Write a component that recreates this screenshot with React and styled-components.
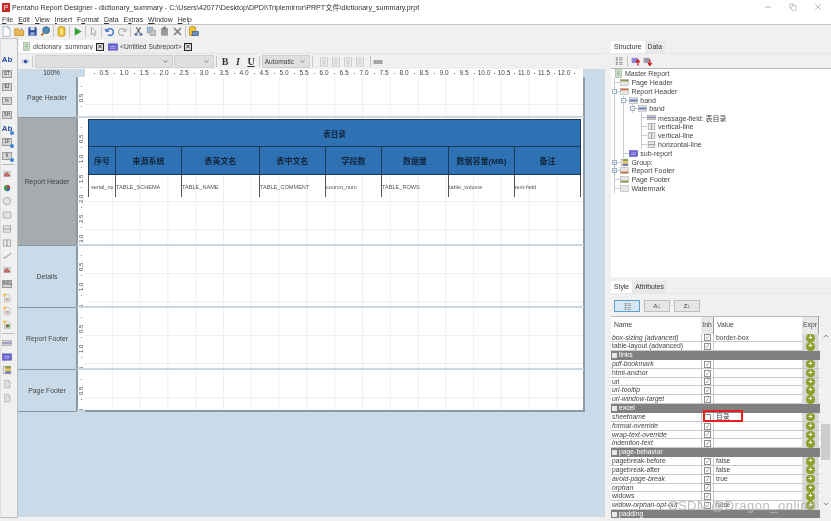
import React from "react";
import styled, { createGlobalStyle } from "styled-components";
import { Minus, Copy, X, ChevronDown, ChevronUp } from "lucide-react";

const GlobalStyle = createGlobalStyle`
  html, body {
    margin: 0;
    padding: 0;
    background: #f0f0f0;
  }
  * {
    box-sizing: border-box;
  }
`;

const SANS = `"Liberation Sans", "Noto Sans CJK SC", sans-serif`;

// small toolbar drawings, keyed by name
const glyphs = {
  doc: <><path d="M3 1h7l3 3v11H3z" fill="#fff" stroke="#8aa0b5" /><path d="M10 1v3h3" fill="none" stroke="#8aa0b5" /></>,
  folder: <><path d="M1 4h5l1 2h7v8H1z" fill="#e8b84a" stroke="#b58a2a" /><path d="M9 2l4 2-2 2z" fill="#88a8cc" /></>,
  save: <><rect x="2" y="2" width="12" height="12" fill="#2d4f9e" /><rect x="5" y="2" width="6" height="4" fill="#dfe7f5" /><rect x="5" y="9" width="6" height="5" fill="#8ea8d8" /></>,
  preview: <><circle cx="9" cy="6" r="5" fill="#4d8cb8" stroke="#2c5a80" /><path d="M5 10l-3 4" stroke="#b5762b" strokeWidth="3" /></>,
  db: <><rect x="3" y="1" width="10" height="14" rx="3" fill="#f3c631" stroke="#a5841c" /><rect x="6" y="4" width="4" height="8" fill="#f9e38d" /></>,
  play: <path d="M4 2l10 6-10 6z" fill="#35a335" />,
  cursor: <path d="M5 2l7 7-3 .4 2 4-2 1-2-4-2 2z" fill="#fff" stroke="#8b8b8b" />,
  undo: <path d="M4 7a5 5 0 1 1 2 6M2 4l1.5 4 4-1" fill="none" stroke="#3e6fc4" strokeWidth="2" />,
  redo: <path d="M12 7a5 5 0 1 0-2 6M14 4l-1.5 4-4-1" fill="none" stroke="#b9b9b9" strokeWidth="2" />,
  cut: <><path d="M5 2l5 8M11 2L6 10" stroke="#666" strokeWidth="1.6" /><circle cx="4.5" cy="12" r="2.2" fill="#5478a8" /><circle cx="11.5" cy="12" r="2.2" fill="#5478a8" /></>,
  copy: <><rect x="2" y="2" width="8" height="8" fill="#a5c0dc" stroke="#7a93ad" /><rect x="6" y="6" width="8" height="8" fill="#c5c5c5" stroke="#999" /></>,
  paste: <><rect x="3" y="3" width="10" height="11" fill="#9a9a9a" /><rect x="6" y="1" width="4" height="4" fill="#777" /></>,
  del: <path d="M3 3l10 10M13 3L3 13" stroke="#888" strokeWidth="2.6" />,
  publish: <><rect x="2" y="1" width="9" height="13" rx="2" fill="#f3c631" stroke="#a5841c" /><rect x="6" y="8" width="9" height="6" fill="#6f8fc0" stroke="#3f5c8c" /></>,
  eye: <><ellipse cx="8" cy="8" rx="7" ry="4" fill="#c6d3ea" /><circle cx="8" cy="8" r="3" fill="#2c4da0" /></>,
  align: <><rect x="2.5" y="1.5" width="11" height="13" fill="#eee" stroke="#b9b9b9" /><path d="M5 5h6M5 8h6M5 11h6" stroke="#b9b9b9" /></>,
  link: <><rect x="1" y="5" width="14" height="6" fill="#9a9a9a" /><path d="M4 8h8" stroke="#ddd" strokeDasharray="2 1" /></>,
  rect: <rect x="2" y="3" width="12" height="10" rx="1" fill="#e3e3e3" stroke="#8d8d8d" />,
  circle: <circle cx="8" cy="8" r="6" fill="#e3e3e3" stroke="#8d8d8d" />,
  hline: <><rect x="2" y="3" width="12" height="10" fill="#e8e8e8" stroke="#8d8d8d" /><path d="M2 8h12" stroke="#666" /></>,
  vline: <><rect x="2" y="3" width="12" height="10" fill="#e8e8e8" stroke="#8d8d8d" /><path d="M8 3v10" stroke="#666" /></>,
  chart: <><rect x="2" y="3" width="12" height="10" fill="#c7c7c7" /><path d="M5 12V7M8 12V5M11 12V8" stroke="#c0392b" strokeWidth="2" /></>,
  pie: <><circle cx="8" cy="8" r="5" fill="#3f9e4d" /><path d="M8 8V3a5 5 0 0 1 5 5z" fill="#d23c3c" /><path d="M8 8h5a5 5 0 0 1-5 5z" fill="#3a62c4" /></>,
  sheet: <><path d="M4 2h6l3 3v9H4z" fill="#eee" stroke="#aaa" /><rect x="2" y="1" width="4" height="4" fill="#f3c631" /><path d="M6 9h5M6 11h5" stroke="#b5533c" /></>,
  colorful: <><path d="M4 2h6l3 3v9H4z" fill="#eee" stroke="#aaa" /><rect x="2" y="1" width="4" height="4" fill="#f3c631" /><rect x="6" y="7" width="6" height="5" fill="#3f9e4d" /><rect x="7" y="8" width="3" height="3" fill="#d23c3c" /></>,
  ink: <path d="M2 12c3-5 4 2 6-3s3 1 6-6" fill="none" stroke="#777" strokeWidth="1.4" />,
  band: <><rect x="1" y="4" width="14" height="8" fill="#d0d0d0" stroke="#999" /><rect x="1" y="7" width="14" height="2" fill="#7c85b8" /></>,
  sub: <><rect x="1" y="3" width="14" height="10" fill="#6a64d6" stroke="#4a44a8" /><path d="M4 7h8M4 10h8" stroke="#dcdcf5" /></>,
  group: <><rect x="2" y="2" width="12" height="12" fill="#eee" stroke="#999" /><rect x="5" y="2" width="9" height="4" fill="#8d9b45" /><rect x="5" y="6" width="9" height="4" fill="#f1c84a" /><rect x="5" y="10" width="9" height="4" fill="#6a7fb8" /></>,
  page: <><path d="M4 2h6l3 3v9H4z" fill="#dedede" stroke="#aaa" /><path d="M10 2v3h3" fill="none" stroke="#aaa" /></>,
  sort: <><path d="M3 3h3M3 6h3M3 10h3M3 13h3" stroke="#555" strokeWidth="1.4" /><path d="M8 3h6M8 6h6M8 10h6M8 13h6" stroke="#888" strokeWidth="1.4" /></>,
  addUp: <><rect x="1" y="3" width="10" height="8" fill="#8c86d8" /><path d="M11 15V7M8 10l3-4 3 4" fill="none" stroke="#d01818" strokeWidth="2" /></>,
  addDown: <><rect x="1" y="3" width="10" height="8" fill="#9a9aa8" /><path d="M11 6v8M8 11l3 4 3-4" fill="none" stroke="#d01818" strokeWidth="2" /></>,
  master: <><rect x="3" y="1" width="10" height="14" fill="#cfe3cf" stroke="#8aa08a" /><path d="M5 5h6M5 8h6M5 11h6" stroke="#6d9a6d" /></>,
  bandGreen: <><rect x="1" y="3" width="14" height="10" fill="#e5e5e5" stroke="#aaa" /><rect x="1" y="3" width="14" height="3" fill="#8d9b45" /></>,
  bandOrange: <><rect x="1" y="3" width="14" height="10" fill="#e5e5e5" stroke="#aaa" /><rect x="1" y="3" width="14" height="3" fill="#c9743c" /></>,
  bandOrangeLow: <><rect x="1" y="3" width="14" height="10" fill="#e5e5e5" stroke="#aaa" /><rect x="1" y="10" width="14" height="3" fill="#c9743c" /></>,
  bandGreenLow: <><rect x="1" y="3" width="14" height="10" fill="#e5e5e5" stroke="#aaa" /><rect x="1" y="10" width="14" height="3" fill="#8d9b45" /></>,
  bandBlue: <><rect x="1" y="3" width="14" height="10" fill="#e5e5e5" stroke="#aaa" /><rect x="1" y="6" width="14" height="4" fill="#7c85b8" /></>,
  watermark: <rect x="1" y="3" width="14" height="10" fill="#e8e8e8" stroke="#aaa" />,
};

const Glyph = ({ name, size = 11 }) => (
  <GlyphSvg viewBox="0 0 16 16" width={size} height={size}>
    {glyphs[name]}
  </GlyphSvg>
);

// label, index of the underlined letter
const menus = [
  ["File", 0], ["Edit", 0], ["View", 0], ["Insert", 0], ["Format", 1],
  ["Data", 0], ["Extras", 1], ["Window", 0], ["Help", 0],
];

const mainTools = [
  "doc", "folder", "save", "preview", null, "db", null, "play", null,
  "cursor", null, "undo", "redo", null, "cut", "copy", "paste", "del", null, "publish",
];

const palette = [
  { text: "Ab", color: "#2c4da0" }, { tag: "ST" }, { tag: "$J" }, { tag: "fx" }, { tag: "SH" },
  { text: "Ab", color: "#2c4da0", dot: true }, { tag: "1F", dot: true }, { tag: "f(", dot: true }, { sep: true },
  { icon: "chart" }, { icon: "pie" }, { icon: "circle" }, { icon: "rect" }, { icon: "hline" }, { icon: "vline" },
  { icon: "ink" }, { icon: "chart" }, { tag: "IMG" }, { icon: "sheet" }, { icon: "sheet" }, { icon: "colorful" }, { sep: true },
  { icon: "band" }, { icon: "sub" }, { icon: "group" }, { icon: "page" }, { icon: "page" },
];

const rulerLabels = Array.from({ length: 24 }, (_, i) => ((i + 1) / 2).toFixed(1));

const columns = [
  ["序号", "serial_no"],
  ["来源系统", "TABLE_SCHEMA"],
  ["表英文名", "TABLE_NAME"],
  ["表中文名", "TABLE_COMMENT"],
  ["字段数", "coumn_num"],
  ["数据量", "TABLE_ROWS"],
  ["数据容量(MB)", "table_volume"],
  ["备注", "text-field"],
];

const bandsData = [
  { name: "Page Header", height: 41, ticks: ["0.5", "0"] },
  { name: "Report Header", height: 128, ticks: ["0.5", "1.0", "1.5", "2.0", "2.5", "3.0"], selected: true, table: true },
  { name: "Details", height: 62, ticks: ["0.5", "1.0", "5"] },
  { name: "Report Footer", height: 62, ticks: ["0.5", "1.0", "5"] },
  { name: "Page Footer", height: 42, ticks: ["0.5", "0"] },
];

const tree = [
  { depth: 0, icon: "master", label: "Master Report" },
  { depth: 1, icon: "bandGreen", label: "Page Header" },
  { depth: 1, icon: "bandOrange", label: "Report Header", toggle: "-" },
  { depth: 2, icon: "bandBlue", label: "band", toggle: "-" },
  { depth: 3, icon: "bandBlue", label: "band", toggle: "-" },
  { depth: 4, icon: "band", label: "message-field: 表目录" },
  { depth: 4, icon: "vline", label: "vertical-line" },
  { depth: 4, icon: "vline", label: "vertical-line" },
  { depth: 4, icon: "hline", label: "horizontal-line" },
  { depth: 2, icon: "sub", label: "sub-report" },
  { depth: 1, icon: "group", label: "Group:", toggle: "+" },
  { depth: 1, icon: "bandOrangeLow", label: "Report Footer", toggle: "+" },
  { depth: 1, icon: "bandGreenLow", label: "Page Footer" },
  { depth: 1, icon: "watermark", label: "Watermark" },
];

const props = [
  { name: "box-sizing (advanced)", italic: true, value: "border-box" },
  { name: "table-layout (advanced)" },
  { section: "links" },
  { name: "pdf-bookmark", italic: true },
  { name: "html-anchor" },
  { name: "url" },
  { name: "url-tooltip", italic: true },
  { name: "url-window-target", italic: true },
  { section: "excel" },
  { name: "sheetname", italic: true, value: "目录", off: true, marked: true },
  { name: "format-override", italic: true },
  { name: "wrap-text-override", italic: true },
  { name: "indention-text", italic: true },
  { section: "page-behavior" },
  { name: "pagebreak-before", value: "false" },
  { name: "pagebreak-after", value: "false" },
  { name: "avoid-page-break", italic: true, value: "true" },
  { name: "orphan", italic: true },
  { name: "widows" },
  { name: "widow-orphan-opt-out", italic: true, value: "false" },
  { section: "padding" },
];

export default function App() {
  return (
    <Shell>
      <GlobalStyle />
      <TitleBar>
        <Logo>P</Logo>
        <TitleText>
          Pentaho Report Designer - dictionary_summary - C:\Users\42077\Desktop\DPDI\Triplemirror\PRPT文件\dictionary_summary.prpt
        </TitleText>
        <WindowButtons>
          <Minus size={10} strokeWidth={1} />
          <Copy size={8} strokeWidth={1} />
          <X size={10} strokeWidth={1} />
        </WindowButtons>
      </TitleBar>

      <MenuBar>
        {menus.map(([label, at]) => (
          <span key={label}>
            {label.slice(0, at)}
            <u>{label[at]}</u>
            {label.slice(at + 1)}
          </span>
        ))}
      </MenuBar>

      <MainToolbar>
        {mainTools.map((t, i) =>
          t ? <ToolSlot key={i}><Glyph name={t} /></ToolSlot> : <ToolSep key={i} />
        )}
      </MainToolbar>

      <Workspace>
        <Palette>
          {palette.map((p, i) => {
            if (p.sep) return <PaletteSep key={i} />;
            return (
              <PaletteItem key={i}>
                {p.icon && <Glyph name={p.icon} size={10} />}
                {p.tag && <PaletteTag>{p.tag}</PaletteTag>}
                {p.text && <PaletteText $color={p.color}>{p.text}</PaletteText>}
                {p.dot && <PaletteDot />}
              </PaletteItem>
            );
          })}
        </Palette>

        <Center>
          <TabRow>
            <DocTab $active>
              <Glyph name="master" size={9} />
              <span>dictionary_summary</span>
              <TabClose><X size={7} strokeWidth={3} /></TabClose>
            </DocTab>
            <DocTab>
              <Glyph name="sub" size={10} />
              <span>&lt;Untitled Subreport&gt;</span>
              <TabClose><X size={7} strokeWidth={3} /></TabClose>
            </DocTab>
          </TabRow>

          <FormatBar>
            <Glyph name="eye" size={9} />
            <ToolSep />
            <Combo $w={138}><ChevronDown size={7} /></Combo>
            <Combo $w={40}><ChevronDown size={7} /></Combo>
            <ToolSep />
            <FormatBtn>B</FormatBtn>
            <FormatBtn $italic>I</FormatBtn>
            <FormatBtn $under>U</FormatBtn>
            <ToolSep />
            <Combo $w={48}>Automatic<ChevronDown size={7} /></Combo>
            <ToolSep />
            <AlignGroup>
              <Glyph name="align" size={10} />
              <Glyph name="align" size={10} />
              <Glyph name="align" size={10} />
              <Glyph name="align" size={10} />
            </AlignGroup>
            <ToolSep />
            <Glyph name="link" size={10} />
          </FormatBar>

          <Canvas>
            <RulerRow>
              <ZoomCell>100%</ZoomCell>
              <HRuler>
                {rulerLabels.map((l) => <RulerMark key={l}>{l}</RulerMark>)}
              </HRuler>
            </RulerRow>

            {bandsData.map((b) => (
              <BandRow key={b.name} $h={b.height}>
                <BandLabel $selected={b.selected}>{b.name}</BandLabel>
                <VRuler>
                  {b.ticks.map((t, i) => <VMark key={i}>{t}</VMark>)}
                </VRuler>
                <BandPage>
                  {b.table && (
                    <ReportTable>
                      <TableTitle>表目录</TableTitle>
                      {columns.map(([head]) => <HeadCell key={head}>{head}</HeadCell>)}
                      {columns.map(([, field]) => <FieldCell key={field}>{field}</FieldCell>)}
                    </ReportTable>
                  )}
                </BandPage>
              </BandRow>
            ))}
          </Canvas>
        </Center>

        <Side>
          <SideTabs>
            <SideTab $active>Structure</SideTab>
            <SideTab>Data</SideTab>
          </SideTabs>
          <SideToolbar>
            <Glyph name="sort" size={10} />
            <ToolSep />
            <Glyph name="addUp" size={10} />
            <Glyph name="addDown" size={10} />
          </SideToolbar>
          <TreePane>
            {tree.map((n, i) => (
              <TreeRow key={i} $depth={n.depth}>
                {n.toggle && <Toggle $depth={n.depth}>{n.toggle}</Toggle>}
                <Glyph name={n.icon} size={9} />
                <span>{n.label}</span>
              </TreeRow>
            ))}
          </TreePane>

          <StyleTabs>
            <SideTab $active>Style</SideTab>
            <SideTab>Attributes</SideTab>
          </StyleTabs>
          <SortBar>
            <SortButton $active><Glyph name="sort" size={9} /></SortButton>
            <SortButton><SortLetters>A↓</SortLetters></SortButton>
            <SortButton><SortLetters>Z↓</SortLetters></SortButton>
          </SortBar>

          <PropArea>
            <PropTable>
              <PropHead>
                <HeadName>Name</HeadName>
                <HeadInh>Inh</HeadInh>
                <HeadValue>Value</HeadValue>
                <HeadExpr>Expr</HeadExpr>
              </PropHead>
              {props.map((p, i) =>
                p.section ? (
                  <SectionRow key={i}>
                    <SectionBox />
                    {p.section}
                  </SectionRow>
                ) : (
                  <PropRow key={i}>
                    <NameCell $italic={p.italic}>{p.name}</NameCell>
                    <InhCell><Check $off={p.off}>{p.off ? "" : "✓"}</Check></InhCell>
                    <ValueCell>{p.value}</ValueCell>
                    <ExprCell><ExprDot>+</ExprDot></ExprCell>
                    {p.marked && <RedMark />}
                  </PropRow>
                )
              )}
              <Watermark>CSDN @Dragon_online</Watermark>
            </PropTable>
            <ScrollBar>
              <ChevronUp size={8} />
              <ScrollThumb />
              <ChevronDown size={8} />
            </ScrollBar>
          </PropArea>
        </Side>
      </Workspace>
    </Shell>
  );
}

const Shell = styled.div`
  width: 831px;
  height: 521px;
  overflow: hidden;
  display: flex;
  flex-direction: column;
  background: #f0f0f0;
  color: #333;
  font-family: ${SANS};
  filter: blur(0.4px);
`;

const GlyphSvg = styled.svg`
  display: block;
  flex: none;
`;

const TitleBar = styled.div`
  height: 14px;
  background: #fff;
  display: flex;
  align-items: center;
  padding-left: 2px;
  font-size: 7.15px;
  color: #333;
`;

const Logo = styled.div`
  width: 8px;
  height: 9px;
  margin-right: 2px;
  background: #c8261e;
  color: #fff;
  font-size: 7px;
  line-height: 9px;
  text-align: center;
`;

const TitleText = styled.div`
  white-space: nowrap;
`;

const WindowButtons = styled.div`
  margin-left: auto;
  width: 68px;
  display: flex;
  justify-content: space-between;
  align-items: center;
  padding-right: 8px;
  color: #555;
`;

const MenuBar = styled.div`
  height: 10px;
  background: #fff;
  border-bottom: 1px solid #c4c4c4;
  display: flex;
  align-items: center;
  gap: 5px;
  padding-left: 2px;
  font-size: 6.9px;
  color: #333;
  box-sizing: content-box;
`;

const MainToolbar = styled.div`
  height: 13px;
  display: flex;
  align-items: center;
`;

const ToolSlot = styled.div`
  width: 13px;
  height: 13px;
  display: flex;
  align-items: center;
  justify-content: center;
`;

const ToolSep = styled.div`
  width: 1px;
  height: 11px;
  background: #c6c6c6;
  margin: 0 1px;
  flex: none;
`;

const Workspace = styled.div`
  flex: 1;
  display: flex;
  min-height: 0;
`;

const Palette = styled.div`
  width: 18px;
  height: 480px;
  flex: none;
  background: #f0f0f0;
  border: 1px solid #c0c0c0;
  border-left: 1px solid #e0e0e0;
  padding-top: 14px;
  display: flex;
  flex-direction: column;
`;

const PaletteItem = styled.div`
  height: 13.75px;
  flex: none;
  position: relative;
  display: flex;
  align-items: center;
  justify-content: center;
  padding-right: 4px;
`;

const PaletteSep = styled.div`
  height: 1px;
  margin: 1px 3px 2px 1px;
  background: #bdbdbd;
  flex: none;
`;

const PaletteTag = styled.div`
  width: 10px;
  height: 8px;
  background: #d6d6d6;
  border: 1px solid #9a9a9a;
  font-size: 4.5px;
  line-height: 6px;
  text-align: center;
  color: #333;
`;

const PaletteText = styled.div`
  font-size: 8px;
  font-weight: bold;
  color: ${(p) => p.$color};
`;

const PaletteDot = styled.div`
  position: absolute;
  right: 3px;
  bottom: 1px;
  width: 4px;
  height: 4px;
  border-radius: 50%;
  background: #3b82d8;
`;

const Center = styled.div`
  width: 587px;
  flex: none;
  display: flex;
  flex-direction: column;
  height: 479px;
`;

const TabRow = styled.div`
  height: 15px;
  display: flex;
  align-items: flex-end;
  padding-top: 2px;
  padding-left: 1px;
  gap: 1px;
`;

const DocTab = styled.div`
  height: 13px;
  width: ${(p) => (p.$active ? "85px" : "87px")};
  background: ${(p) => (p.$active ? "#fff" : "#ececec")};
  display: flex;
  align-items: center;
  gap: 2px;
  padding-left: 3px;
  font-size: 6.7px;
  overflow: hidden;
  color: #444;

  span {
    flex: 1;
    overflow: hidden;
    white-space: nowrap;
  }
`;

const TabClose = styled.div`
  width: 8px;
  height: 8px;
  flex: none;
  border: 1px solid #222;
  background: #ddd;
  display: flex;
  align-items: center;
  justify-content: center;
  color: #111;
`;

const FormatBar = styled.div`
  height: 16px;
  background: #f0f0f0;
  border-top: 1px solid #e4e4e4;
  display: flex;
  align-items: center;
  padding-left: 3px;
  gap: 1px;
`;

const Combo = styled.div`
  width: ${(p) => p.$w}px;
  height: 13px;
  flex: none;
  background: #dfdfdf;
  border: 1px solid #d0d0d0;
  display: flex;
  align-items: center;
  justify-content: flex-end;
  gap: 5px;
  font-size: 6.6px;
  padding: 0 3px 0 1px;
  color: #444;
`;

const FormatBtn = styled.div`
  width: 12px;
  text-align: center;
  font-family: "Liberation Serif", serif;
  font-size: 10px;
  font-weight: bold;
  color: #333;
  font-style: ${(p) => (p.$italic ? "italic" : "normal")};
  text-decoration: ${(p) => (p.$under ? "underline" : "none")};
`;

const AlignGroup = styled.div`
  display: flex;
  gap: 2px;
  margin: 0 3px 0 4px;
`;

const Canvas = styled.div`
  flex: 1;
  background: #c9dbe8;
  display: flex;
  flex-direction: column;
  min-height: 0;
`;

const RulerRow = styled.div`
  height: 8px;
  display: flex;
`;

const ZoomCell = styled.div`
  width: 67px;
  flex: none;
  font-size: 6.5px;
  line-height: 8px;
  text-align: center;
  color: #333;
`;

// ticks sit half way between two labels
const HRuler = styled.div`
  width: 498px;
  flex: none;
  background-color: #fff;
  background-image: repeating-linear-gradient(
    to right,
    transparent 0,
    transparent 9px,
    #777 9px,
    #777 10px,
    transparent 10px,
    transparent 20px
  );
  background-size: 100% 1px;
  background-position: 0 4px;
  background-repeat: no-repeat;
  display: flex;
  padding-left: 9px;
`;

const RulerMark = styled.div`
  width: 20px;
  flex: none;
  font-size: 6.5px;
  line-height: 8px;
  text-align: center;
  color: #444;
`;

const BandRow = styled.div`
  height: ${(p) => p.$h}px;
  flex: none;
  display: flex;
  width: 587px;

  &:last-child > div:last-child {
    border-bottom-color: #8d99a3;
  }
`;

const BandLabel = styled.div`
  width: 58px;
  flex: none;
  display: flex;
  align-items: center;
  justify-content: center;
  font-size: 6.8px;
  color: #444;
  background: ${(p) => (p.$selected ? "#a6abb0" : "#c9dbe8")};
  border-bottom: 1px solid #8b979f;
`;

const VRuler = styled.div`
  width: 9px;
  flex: none;
  background-color: #fff;
  background-image: repeating-linear-gradient(
    to bottom,
    transparent 0,
    transparent 9px,
    #888 9px,
    #888 10px,
    transparent 10px,
    transparent 20px
  );
  background-size: 1px 100%;
  background-position: 3px 0;
  background-repeat: no-repeat;
  border-left: 2px solid #8d99a3;
  border-bottom: 2px solid #ccd6de;
  padding-top: 10px;
  display: flex;
  flex-direction: column;
  overflow: hidden;
`;

const VMark = styled.div`
  flex: none;
  writing-mode: vertical-rl;
  transform: rotate(180deg);
  font-size: 6px;
  line-height: 7px;
  text-align: center;
  color: #444;
  background: #fff;
  height: 11px;
  margin: 4.5px 0;
`;

const BandPage = styled.div`
  width: 500px;
  flex: none;
  background-color: #fff;
  background-image:
    linear-gradient(to right, #efefef 1px, transparent 1px),
    linear-gradient(to bottom, #efefef 1px, transparent 1px);
  background-size: 27.8px 28px;
  background-position: -1px -1px;
  border-right: 2px solid #8d99a3;
  border-bottom: 2px solid #ccd6de;
  padding: 1px 0 0 3px;
`;

const ReportTable = styled.div`
  width: 493px;
  display: grid;
  grid-template-columns: 27px 66px 78px 66px 56px 67px 66px 67px;
  grid-template-rows: 27px 29px 22px;
`;

const TableTitle = styled.div`
  grid-column: 1 / -1;
  background: #2e72b4;
  border: 1px solid #1b3a58;
  border-bottom: 0;
  display: flex;
  align-items: center;
  justify-content: center;
  font-size: 7.5px;
  font-weight: bold;
  color: #10243a;
`;

const HeadCell = styled.div`
  background: #2e72b4;
  border-top: 1px solid #1b3a58;
  border-bottom: 1px solid #1b3a58;
  border-left: 1px solid #1b3a58;
  display: flex;
  align-items: center;
  justify-content: center;
  font-size: 8px;
  font-weight: bold;
  color: #10243a;

  &:nth-child(9) {
    border-right: 1px solid #1b3a58;
  }
`;

const FieldCell = styled.div`
  border-left: 1px solid #555;
  font-size: 5.6px;
  line-height: 24px;
  white-space: nowrap;
  overflow: hidden;
  color: #555;

  &:nth-child(10) {
    padding-left: 2px;
  }

  &:last-child {
    border-right: 1px solid #555;
  }
`;

const Side = styled.div`
  width: 220px;
  margin-left: 6px;
  flex: none;
  display: flex;
  flex-direction: column;
  height: 480px;
`;

const SideTabs = styled.div`
  height: 15px;
  padding-top: 2px;
  display: flex;
  align-items: flex-end;
`;

const SideTab = styled.div`
  height: 12px;
  padding: 0 3px;
  background: ${(p) => (p.$active ? "#fff" : "#e8e8e8")};
  font-size: 6.8px;
  line-height: 12px;
  color: #333;
`;

const SideToolbar = styled.div`
  height: 16px;
  display: flex;
  align-items: center;
  gap: 2px;
  padding-left: 3px;
  border-bottom: 1px solid #b9b9b9;
  border-top: 1px solid #e6e6e6;
`;

const TreePane = styled.div`
  height: 208px;
  flex: none;
  background: #fff;
  display: flex;
  flex-direction: column;
`;

// guide lines of the tree: one per ancestor level, plus the stub into the icon
const treeLine = "#c3ccd4";
const guideX = (level) => (level - 1) * 8.9 + 3;
const treeGuides = (depth) => {
  const layers = [];
  for (let level = 1; level <= depth; level++) {
    if (level === 3 && depth === 4) continue;
    layers.push(`linear-gradient(${treeLine}, ${treeLine}) ${guideX(level)}px 0 / 1px 100% no-repeat`);
  }
  if (depth > 0) {
    layers.push(`linear-gradient(${treeLine}, ${treeLine}) ${guideX(depth)}px 50% / 6px 1px no-repeat`);
  }
  return layers.length ? layers.join(", ") : "none";
};

const TreeRow = styled.div`
  height: 8.87px;
  flex: none;
  position: relative;
  display: flex;
  align-items: center;
  gap: 2px;
  padding-left: ${(p) => p.$depth * 8.9 + (p.$depth === 0 ? 3 : 0.5)}px;
  font-size: 7px;
  color: #444;
  white-space: nowrap;
  background: ${(p) => treeGuides(p.$depth)};
`;

const Toggle = styled.div`
  position: absolute;
  width: 5px;
  height: 5px;
  top: 2px;
  left: ${(p) => guideX(p.$depth) - 2}px;
  border: 1px solid #9fb2c4;
  font-size: 5px;
  line-height: 3px;
  text-align: center;
  color: #5a7a9a;
  background: #fff;
`;

const StyleTabs = styled.div`
  height: 16px;
  padding-top: 4px;
  display: flex;
  align-items: flex-end;
`;

const SortBar = styled.div`
  height: 23px;
  display: flex;
  align-items: center;
  gap: 4px;
  padding: 2px 0 0 3px;
  border-top: 1px solid #e8e8e8;
`;

const SortButton = styled.div`
  width: 26px;
  height: 12px;
  display: flex;
  align-items: center;
  justify-content: center;
  background: ${(p) => (p.$active ? "#d7e8f5" : "#e6e6e6")};
  border: 1px solid ${(p) => (p.$active ? "#5d9fd0" : "#bdbdbd")};
`;

const SortLetters = styled.span`
  font-size: 6px;
  color: #334;
`;

const PropArea = styled.div`
  flex: 1;
  display: flex;
  min-height: 0;
`;

const PropTable = styled.div`
  width: 209px;
  flex: none;
  position: relative;
  overflow: hidden;
`;

const PropHead = styled.div`
  height: 17.5px;
  display: grid;
  grid-template-columns: 90px 12px 89px 17px;
  font-size: 6.8px;
  line-height: 16px;
  color: #444;
  background: #fff;
  border-top: 1px solid #b9b9b9;
`;

const HeadName = styled.div`
  padding-left: 3px;
`;

const HeadInh = styled.div`
  background: #e8e8e8;
  text-align: center;
`;

const HeadValue = styled.div`
  padding-left: 3px;
  border-left: 1px solid #999;
`;

const HeadExpr = styled.div`
  background: #e8e8e8;
  text-align: center;
  border-right: 1px solid #999;
`;

const PropRow = styled.div`
  height: 8.83px;
  position: relative;
  display: grid;
  grid-template-columns: 90px 12px 89px 17px;
  background: #fff;
  border-bottom: 1px solid #c8c8c8;
  font-size: 6.8px;
  line-height: 8px;
  color: #444;
`;

const NameCell = styled.div`
  font-style: ${(p) => (p.$italic ? "italic" : "normal")};
  padding-left: 1px;
  white-space: nowrap;
  overflow: hidden;
`;

const InhCell = styled.div`
  display: flex;
  align-items: center;
  justify-content: center;
  border-left: 1px solid #c8c8c8;
`;

const Check = styled.div`
  width: 7px;
  height: 7px;
  border: 1px solid #8f8f8f;
  background: #fff;
  font-size: 5px;
  line-height: 5px;
  text-align: center;
  color: #555;
`;

const ValueCell = styled.div`
  padding-left: 2px;
  border-left: 1px solid #c8c8c8;
`;

const ExprCell = styled.div`
  background: #d8d8d8;
  display: flex;
  align-items: center;
  justify-content: center;
`;

const ExprDot = styled.div`
  width: 8.5px;
  height: 8.5px;
  flex: none;
  border-radius: 50%;
  background: #8e9f2c;
  color: #fff;
  font-size: 7px;
  line-height: 8px;
  text-align: center;
  font-weight: bold;
`;

const SectionRow = styled.div`
  height: 8.83px;
  background: #808080;
  color: #fff;
  font-size: 6.8px;
  line-height: 8.83px;
  display: flex;
  align-items: center;
  gap: 2px;
  padding-left: 1px;
`;

const SectionBox = styled.div`
  width: 5px;
  height: 5px;
  background: #e8e8e8;
`;

const RedMark = styled.div`
  position: absolute;
  left: 92px;
  top: -3px;
  width: 40px;
  height: 12px;
  border: 2px solid #e8201c;
`;

const Watermark = styled.div`
  position: absolute;
  left: 57px;
  bottom: 5px;
  font-size: 13px;
  letter-spacing: 0.5px;
  color: rgba(120, 120, 120, 0.5);
  text-shadow: 0 0 1px rgba(255, 255, 255, 0.8);
  white-space: nowrap;
`;

const ScrollBar = styled.div`
  width: 11px;
  flex: none;
  display: flex;
  flex-direction: column;
  align-items: center;
  padding-top: 16px;
  color: #555;
`;

const ScrollThumb = styled.div`
  width: 9px;
  height: 36px;
  margin: 84px 0 40px;
  flex: none;
  background: #cdcdcd;
`;
